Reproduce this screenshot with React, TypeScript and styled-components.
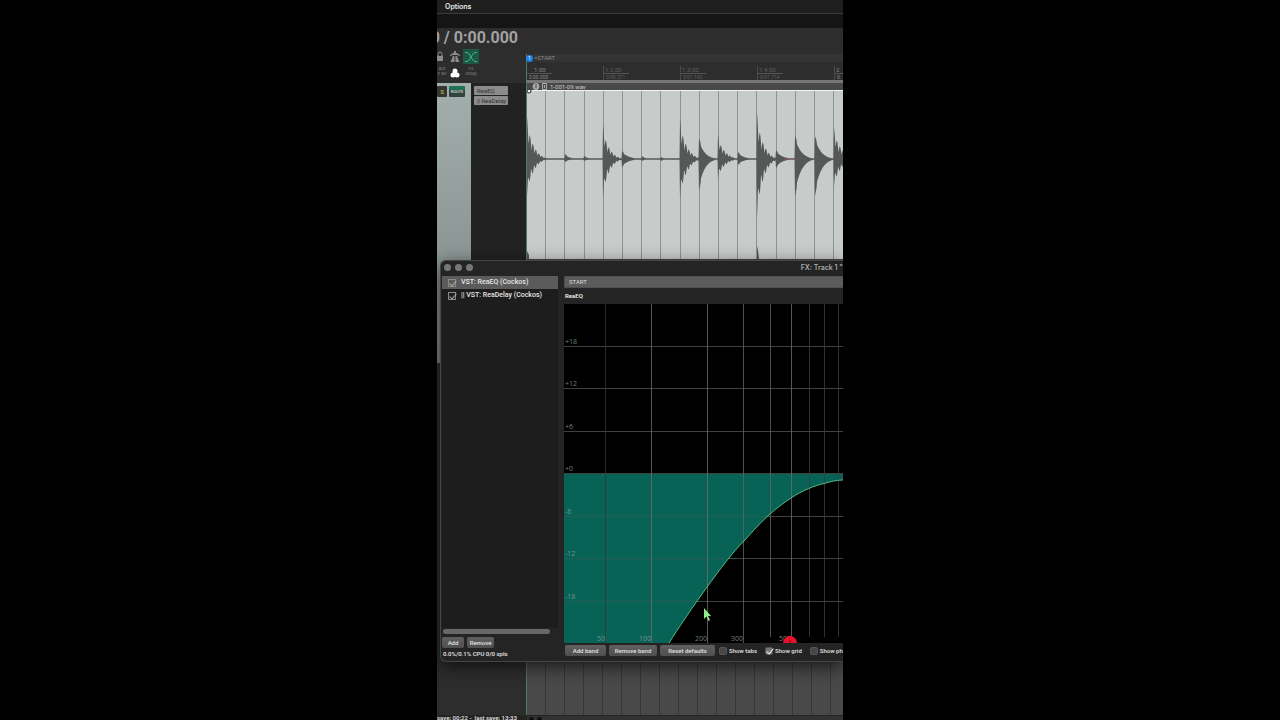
import React from "react";
import styled, { createGlobalStyle } from "styled-components";

const Global = createGlobalStyle`
  * { box-sizing: border-box; }
  body {
    margin: 0;
    background: #000;
    color: #ddd;
    font-family: Inter, "Liberation Sans", sans-serif;
    font-size: 7px;
    line-height: 10px;
  }
  button, input, select { font: inherit; color: inherit; margin: 0; }
`;

const Page = styled.main`
  display: flex;
  justify-content: center;
  height: 100vh;
  overflow: hidden;
`;

const Stage = styled.div`
  position: relative;
  display: flex;
  flex-direction: column;
  width: 100%;
  max-width: 406px;
  overflow: hidden;
  background: #2d2d2d;
`;

const MenuBar = styled.nav`
  height: 14px;
  flex: none;
  padding: 1px 8px;
  background: #1f1f1f;
  border-bottom: 1px solid #3b3b3b;
`;

const MenuButton = styled.button`
  display: block;
  padding: 0;
  border: 0;
  background: none;
  color: #e8e8e8;
  font-size: 7px;
  font-weight: 600;
  line-height: 11px;
`;

const Strip = styled.div`
  height: 14px;
  flex: none;
  background: #151515;
`;

const Workspace = styled.div`
  display: grid;
  grid-template-columns: 89px minmax(0, 1fr);
  flex: 1;
  min-height: 0;
`;

const SideColumn = styled.div`
  display: flex;
  flex-direction: column;
  min-width: 0;
`;

const TimeReadout = styled.div`
  height: 21px;
  flex: none;
  padding-right: 8px;
  display: flex;
  justify-content: flex-end;
  overflow: hidden;
  color: #a2a2a2;
  font: bold 16px/19px Roboto, sans-serif;
  white-space: pre;
`;

const ToolGrid = styled.div`
  display: grid;
  grid-template-columns: 10px 16px 16px;
  grid-template-rows: 16px 18px;
  height: 34px;
  flex: none;
`;

const ToolButton = styled.button<{ $active?: boolean }>`
  display: flex;
  align-items: center;
  justify-content: center;
  height: 15px;
  padding: 0;
  border: 0;
  background: ${(p) => (p.$active ? "#1d5846" : "transparent")};
`;

const ToolLabel = styled.span`
  display: flex;
  justify-content: center;
  align-items: flex-start;
  padding-top: 1px;
  color: #8a8a8a;
  font-size: 4px;
  line-height: 5px;
  text-align: center;
`;

const TrackRow = styled.section`
  display: grid;
  grid-template-columns: 34px 1fr;
  height: 280px;
  flex: none;
`;

const TrackPanel = styled.div`
  display: flex;
  gap: 2px;
  padding-top: 3px;
  background: linear-gradient(#a3afac, #8c9795 60%, #7b8583);
`;

const TrackButton = styled.button<{ $wide?: boolean }>`
  width: ${(p) => (p.$wide ? "16px" : "10px")};
  height: 11px;
  padding: 0;
  border: 0;
  border-radius: 1px;
  background: ${(p) => (p.$wide ? "linear-gradient(#1d7357 30%, #34423d 40%)" : "#33372f")};
  color: ${(p) => (p.$wide ? "#b5c9c1" : "#b0a54a")};
  font-family: Roboto, sans-serif;
  font-size: ${(p) => (p.$wide ? "4px" : "6px")};
  font-weight: 700;
  line-height: 11px;
`;

const FxSlots = styled.div`
  display: flex;
  flex-direction: column;
  gap: 1px;
  padding: 3px;
  background: #222;
`;

const FxSlot = styled.button`
  width: 34px;
  height: 9px;
  padding: 0 3px;
  border: 0;
  border-radius: 1px;
  background: #8b8b8b;
  color: #333;
  font: 6px/9px Roboto, sans-serif;
  text-align: left;
  white-space: pre;
`;

const ArrangeColumn = styled.div`
  display: flex;
  flex-direction: column;
  min-width: 0;
  padding-top: 26px;
`;

const Timeline = styled.div`
  display: flex;
  flex-direction: column;
  flex: 1;
  min-height: 0;
  border-left: 1px solid #55746a;
`;

const MarkerLane = styled.div`
  display: flex;
  align-items: center;
  gap: 1px;
  height: 8px;
  flex: none;
  background: #343434;
  color: #8a8a8a;
  font: 6px/8px Roboto, sans-serif;
`;

const MarkerBadge = styled.span`
  width: 7px;
  height: 7px;
  flex: none;
  margin-left: -1px;
  border-radius: 50%;
  background: #1e80ea;
  color: #fff;
  font-size: 5px;
  line-height: 7px;
  text-align: center;
`;

const Ruler = styled.div`
  display: grid;
  grid-template-columns: repeat(4, 77px) 1fr;
  height: 18px;
  flex: none;
  overflow: hidden;
  background: #2d2d2d;
`;

const RulerMark = styled.div<{ $lead?: boolean }>`
  margin: 4px 0 0 -1px;
  border-left: 1px solid #4b4b4b;
  color: ${(p) => (p.$lead ? "#8a8a8a" : "#606060")};
  font: 5px/6px Roboto, sans-serif;
  overflow: hidden;
  white-space: nowrap;
`;

const BarLabel = styled.span<{ $indent?: boolean }>`
  display: block;
  width: 25px;
  height: 8px;
  padding: 1px 0 0 ${(p) => (p.$indent ? "7px" : "1px")};
  border-bottom: 1px solid #555;
  font-size: 6px;
`;

const TimeLabel = styled.span`
  display: block;
  padding-left: 2px;
`;

const ItemEdge = styled.div`
  height: 3px;
  flex: none;
  background: #777;
`;

const ItemHeader = styled.div`
  display: flex;
  align-items: center;
  gap: 2px;
  height: 7px;
  flex: none;
  padding-left: 5px;
  background: #494949;
  color: #ccc;
  font: 6px/7px Roboto, sans-serif;
`;

const Drawing = styled.svg`
  display: block;
  flex: none;
`;

const LowerArrange = styled.div`
  flex: 1;
  min-height: 0;
  background: repeating-linear-gradient(90deg, transparent 0 18px, #363636 18px 19px), #494949;
`;

const Footer = styled.footer`
  display: grid;
  grid-template-columns: 89px 1fr;
  height: 5px;
  flex: none;
  overflow: hidden;
  background: #242424;
  color: #ddd;
  font: 600 6px/6px Roboto, sans-serif;
  white-space: nowrap;
`;

const ScrollTrack = styled.div`
  display: flex;
  align-items: center;
  gap: 3px;
  margin-top: 1px;
  padding-left: 2px;
  background: #333;
  border-left: 1px solid #222;
`;

const ScrollNub = styled.i`
  width: 5px;
  height: 4px;
  border-radius: 3px;
  background: #111;
`;

const FxWindow = styled.section`
  position: absolute;
  top: 260px;
  left: 3px;
  right: 0;
  height: 402px;
  display: flex;
  flex-direction: column;
  overflow: hidden;
  border: 1px solid #454545;
  border-right: 0;
  border-radius: 6px 0 0 6px;
  background: #242424;
  box-shadow: 0 5px 18px rgba(0, 0, 0, 0.65);
`;

const TitleBar = styled.header`
  display: flex;
  align-items: center;
  gap: 4px;
  height: 15px;
  flex: none;
  padding: 0 0 2px 3px;
  color: #aaa;
  white-space: nowrap;
`;

const WindowDot = styled.button`
  width: 7px;
  height: 7px;
  padding: 0;
  border: 0;
  border-radius: 50%;
  background: #777;
`;

const WindowTitle = styled.h1`
  margin: 0 0 0 auto;
  font-size: 7px;
  font-weight: 600;
  line-height: 10px;
`;

const WindowBody = styled.div`
  display: grid;
  grid-template-columns: 117px minmax(0, 1fr);
  column-gap: 6px;
  flex: 1;
  min-height: 0;
`;

const ChainColumn = styled.div`
  display: flex;
  flex-direction: column;
  padding-left: 1px;
`;

const ChainList = styled.div`
  flex: 1;
  background: #1d1d1d;
`;

const ChainItem = styled.label<{ $selected?: boolean }>`
  display: flex;
  align-items: center;
  gap: 5px;
  height: 13px;
  padding-left: 6px;
  background: ${(p) => (p.$selected ? "#5b5b5b" : "transparent")};
  color: #e6e6e6;
  font: 500 7px/13px Roboto, sans-serif;
  white-space: pre;
`;

const CheckBox = styled.input<{ $filled?: boolean }>`
  appearance: none;
  width: 8px;
  height: 8px;
  flex: none;
  border: 1px solid ${(p) => (p.$filled ? "#555" : "#8a8a8a")};
  border-radius: ${(p) => (p.$filled ? "2px" : "0")};
  background: ${(p) => (p.$filled ? "#484848" : "transparent")};

  &:checked {
    background: ${(p) => (p.$filled ? "#777" : "transparent")};
  }
  &:checked::after {
    content: "";
    display: block;
    width: 3px;
    height: 6px;
    margin: -1px 0 0 2px;
    border: solid ${(p) => (p.$filled ? "#eee" : "#aaa")};
    border-width: 0 1px 1px 0;
    transform: rotate(40deg);
  }
`;

const ListScroll = styled.div`
  height: 5px;
  margin: 1px 8px 0 1px;
  flex: none;
  border-radius: 3px;
  background: #686868;
`;

const ButtonRow = styled.div`
  display: flex;
  align-items: center;
  gap: 3px;
  height: 10px;
  margin-top: 3px;
  flex: none;
`;

const PushButton = styled.button<{ $width: number }>`
  width: ${(p) => p.$width}px;
  height: 11px;
  flex: none;
  padding: 0;
  border: 0;
  border-radius: 2px;
  background: linear-gradient(#606060, #4f4f4f);
  color: #e2e2e2;
  font: 500 6px/11px Roboto, sans-serif;
  white-space: nowrap;
`;

const CpuStatus = styled.p`
  height: 14px;
  margin: 0;
  padding: 1px;
  font: 500 6px/12px Roboto, sans-serif;
  color: #e8e8e8;
`;

const PluginColumn = styled.div`
  display: flex;
  flex-direction: column;
  min-width: 0;
`;

const PresetSelect = styled.select`
  appearance: none;
  width: 100%;
  height: 12px;
  flex: none;
  padding: 0 4px;
  border: 1px solid #505050;
  border-right: 0;
  border-radius: 2px 0 0 2px;
  background: #5c5c5c;
  color: #ddd;
  font: 6px/10px Roboto, sans-serif;
`;

const PluginName = styled.h2`
  height: 16px;
  margin: 0;
  padding: 3px 0 0 1px;
  flex: none;
  color: #eee;
  font: 600 6px/10px Roboto, sans-serif;
`;

const Controls = styled.div`
  display: flex;
  align-items: center;
  gap: 3px;
  height: 11px;
  margin-top: 2px;
  padding-left: 1px;
  overflow: hidden;
`;

const Options = styled.div`
  display: flex;
  gap: 8px;
  padding-left: 1px;
`;

const Option = styled.label`
  display: flex;
  align-items: center;
  gap: 2px;
  flex: none;
  color: #e2e2e2;
  font: 500 6px/10px Roboto, sans-serif;
  white-space: nowrap;
`;

const Pointer = styled.svg`
  position: absolute;
  top: 608px;
  left: 267px;
`;

type Hit = { x: number; up: number; down: number; decay: number; ring?: boolean };

const hits: Hit[] = [
  { x: 0, up: 42, down: 38, decay: 11, ring: true },
  { x: 38, up: 5, down: 3, decay: 6 },
  { x: 57, up: 3, down: 2, decay: 6 },
  { x: 76, up: 34, down: 40, decay: 10, ring: true },
  { x: 95, up: 8, down: 8, decay: 10 },
  { x: 115, up: 3, down: 2, decay: 4 },
  { x: 134, up: 2, down: 2, decay: 4 },
  { x: 153, up: 40, down: 41, decay: 12, ring: true },
  { x: 172, up: 21, down: 32, decay: 8 },
  { x: 191, up: 24, down: 20, decay: 12, ring: true },
  { x: 211, up: 7, down: 6, decay: 8 },
  { x: 230, up: 46, down: 60, decay: 11, ring: true },
  { x: 249, up: 9, down: 9, decay: 9 },
  { x: 268, up: 24, down: 38, decay: 9 },
  { x: 288, up: 23, down: 37, decay: 9 },
  { x: 307, up: 31, down: 28, decay: 14, ring: true },
];

const CENTER = 69;

function wavePath() {
  const top: string[] = [];
  const bottom: string[] = [];
  for (let x = 0; x <= 316; x += 0.5) {
    const hit = [...hits].reverse().find((h) => x >= h.x) ?? hits[0];
    const t = x - hit.x;
    const fade = Math.exp(-t / hit.decay) * Math.max(0.05, 1 - t / 22);
    const attack = t < 2 ? 1 : 0.85;
    const ring = (phase: number) =>
      hit.ring ? 0.45 + 0.55 * Math.abs(Math.cos((Math.PI * t) / 3 + phase)) : 1;
    top.push(`${x},${CENTER - Math.max(0.7, hit.up * fade * attack * ring(0))}`);
    bottom.unshift(`${x},${CENTER + Math.max(0.7, hit.down * fade * attack * ring(0.3))}`);
  }
  return `M${top.join("L")}L${bottom.join("L")}Z`;
}

const gridLines = Array.from({ length: 16 }, (_, i) => Math.round((i + 1) * 19.2) - 0.5);

function Waveform() {
  return (
    <Drawing width="316" height="169" viewBox="0 0 316 169" aria-label="Waveform">
      <rect width="316" height="169" fill="#c7cccb" />
      <rect width="316" height="1" fill="#f5f5f5" />
      {gridLines.map((x) => (
        <path key={x} d={`M${x} 1V169`} stroke="#8d9391" />
      ))}
      <path d={wavePath()} fill="#555857" />
      <path d="M258 69h10" stroke="#a95a62" strokeOpacity="0.7" />
      <path d="M0 161l2 4v5H0zM230 156l1 4 1 9h-2z" fill="#555857" />
      <circle cx="2" cy="1" r="2" fill="#eee" stroke="#222" />
    </Drawing>
  );
}

const verticals: [number, string][] = [
  [41.5, "#363636"],
  [87.5, "#6d6d6d"],
  [143.5, "#6d6d6d"],
  [179.5, "#626262"],
  [206.5, "#626262"],
  [227.5, "#6d6d6d"],
  [245.5, "#3c3c3c"],
  [260.5, "#3c3c3c"],
  [274.5, "#3c3c3c"],
];
const levels: [number, string][] = [
  [42.5, "+18"],
  [84.5, "+12"],
  [127.5, "+6"],
  [169.5, "+0"],
  [212.5, "-6"],
  [254.5, "-12"],
  [297.5, "-18"],
];
const frequencies: [number, string][] = [
  [33, "50"],
  [75, "100"],
  [131, "200"],
  [167, "300"],
  [215, "500"],
];
const curve =
  "M105 339C113 326 130 301 143 283C157 264 168 249 180 237C190 226 198 217 206 210C214 203 221 198 227 194C239 186 250 182 260 179.500C267 177.500 273 176 279 176";

function EqGraph() {
  return (
    <Drawing width="279" height="339" viewBox="0 0 279 339" aria-label="Equalizer curve">
      <rect width="279" height="339" fill="#000" />
      {levels.map(([y]) => (
        <path key={y} d={`M0 ${y}H279`} stroke="#404040" />
      ))}
      <path d={`${curve}V170H0V339Z`} fill="#066356" />
      {levels.slice(4).map(([y]) => (
        <path key={y} d={`M0 ${y}H${206 - (y - 212) / 1.25}`} stroke="#265e53" />
      ))}
      {verticals.map(([x, color], i) => (
        <path key={x} d={`M${x} 0V${i > 3 ? 333 : 339}`} stroke={color} strokeOpacity="0.8" />
      ))}
      <path d={curve} fill="none" stroke="#58b882" />
      <g fill="#8f9a96" fillOpacity="0.85" fontFamily="Open Sans, sans-serif" fontSize="7">
        {levels.map(([y, text]) => (
          <text key={text} x="1" y={y - 3}>{text}</text>
        ))}
        {frequencies.map(([x, text]) => (
          <text key={text} x={x} y="337">{text}</text>
        ))}
      </g>
      <circle cx="226" cy="339" r="7" fill="#e5142a" />
      <path d="M226 336v3" stroke="#701" />
    </Drawing>
  );
}

export default function App() {
  return (
    <Page>
      <Global />
      <Stage>
        <MenuBar>
          <MenuButton>Options</MenuButton>
        </MenuBar>
        <Strip />
        <Workspace>
          <SideColumn>
            <TimeReadout>0 / 0:00.000</TimeReadout>
            <ToolGrid>
              <ToolButton aria-label="Lock">
                <svg width="10" height="12" viewBox="0 0 10 12">
                  <path d="M0 5h6v5H0z" fill="#8b8b8b" />
                  <path d="M1 5V3a2 2 0 0 1 4 0v2" fill="none" stroke="#8b8b8b" />
                </svg>
              </ToolButton>
              <ToolButton aria-label="Metronome">
                <svg width="12" height="12" viewBox="0 0 12 12" fill="#8b8b8b">
                  <path d="M5 0h2v2H5zM1 4l3-2h4l3 2v1L8 4H4L1 5z" />
                  <path d="M4 5h1.500v6H1.500zM8 5H6.500v6h4z" />
                </svg>
              </ToolButton>
              <ToolButton $active aria-label="Crossfade">
                <svg width="12" height="12" viewBox="0 0 12 12" fill="none" stroke="#45b687">
                  <path d="M0 1.500h2c3 0 5 9 8 9h2M0 10.500h2c3 0 5-9 8-9h2" />
                </svg>
              </ToolButton>
              <ToolLabel>ack<br />v sel</ToolLabel>
              <ToolButton aria-label="Group">
                <svg width="10" height="10" viewBox="0 0 10 10" fill="#fff">
                  <circle cx="5" cy="3" r="2.500" />
                  <circle cx="3" cy="7" r="2.500" />
                  <circle cx="7" cy="7" r="2.500" />
                </svg>
              </ToolButton>
              <ToolLabel>FX<br />Group</ToolLabel>
            </ToolGrid>
            <TrackRow>
              <TrackPanel>
                <TrackButton>S</TrackButton>
                <TrackButton $wide>ROUTE</TrackButton>
              </TrackPanel>
              <FxSlots>
                <FxSlot>ReaEQ</FxSlot>
                <FxSlot>|| ReaDelay</FxSlot>
              </FxSlots>
            </TrackRow>
          </SideColumn>
          <ArrangeColumn>
            <Timeline>
              <MarkerLane>
                <MarkerBadge>1</MarkerBadge>=START
              </MarkerLane>
              <Ruler>
                <RulerMark $lead><BarLabel $indent>1.00</BarLabel><TimeLabel>0:00.000</TimeLabel></RulerMark>
                <RulerMark><BarLabel>1.2.00</BarLabel><TimeLabel>0:00.571</TimeLabel></RulerMark>
                <RulerMark><BarLabel>1.3.00</BarLabel><TimeLabel>0:01.142</TimeLabel></RulerMark>
                <RulerMark><BarLabel>1.4.00</BarLabel><TimeLabel>0:01.714</TimeLabel></RulerMark>
                <RulerMark $lead><BarLabel>2</BarLabel><TimeLabel>0:</TimeLabel></RulerMark>
              </Ruler>
              <ItemEdge />
              <ItemHeader>
                <svg width="16" height="7" viewBox="0 0 16 7" fill="none" stroke="#aaa">
                  <circle cx="4" cy="3.500" r="3" fill="#aaa" />
                  <path d="M4 1v4" stroke="#444" />
                  <path d="M10.500 .5h4v6h-4zM12.500 2v3" />
                </svg>
                1-001-09.wav
              </ItemHeader>
              <Waveform />
              <LowerArrange />
            </Timeline>
          </ArrangeColumn>
        </Workspace>
        <Footer>
          <span>save: 00:22 - &nbsp;last save: 13:33</span>
          <ScrollTrack><ScrollNub /><ScrollNub /></ScrollTrack>
        </Footer>

        <FxWindow>
          <TitleBar>
            <WindowDot aria-label="Close" />
            <WindowDot aria-label="Minimize" />
            <WindowDot aria-label="Zoom" />
            <WindowTitle>FX: Track 1 "</WindowTitle>
          </TitleBar>
          <WindowBody>
            <ChainColumn>
              <ChainList>
                <ChainItem $selected>
                  <CheckBox type="checkbox" defaultChecked />VST: ReaEQ (Cockos)
                </ChainItem>
                <ChainItem>
                  <CheckBox type="checkbox" defaultChecked />|| VST: ReaDelay (Cockos)
                </ChainItem>
              </ChainList>
              <ListScroll />
              <ButtonRow>
                <PushButton $width={22}>Add</PushButton>
                <PushButton $width={27}>Remove</PushButton>
              </ButtonRow>
              <CpuStatus>0.0%/0.1% CPU 0/0 spls</CpuStatus>
            </ChainColumn>
            <PluginColumn>
              <PresetSelect aria-label="Preset" defaultValue="START">
                <option>START</option>
              </PresetSelect>
              <PluginName>ReaEQ</PluginName>
              <EqGraph />
              <Controls>
                <PushButton $width={41}>Add band</PushButton>
                <PushButton $width={48}>Remove band</PushButton>
                <PushButton $width={55}>Reset defaults</PushButton>
                <Options>
                  <Option><CheckBox $filled type="checkbox" />Show tabs</Option>
                  <Option><CheckBox $filled type="checkbox" defaultChecked />Show grid</Option>
                  <Option><CheckBox $filled type="checkbox" />Show ph</Option>
                </Options>
              </Controls>
            </PluginColumn>
          </WindowBody>
        </FxWindow>
        <Pointer width="7" height="14" viewBox="0 0 7 14">
          <path d="M0 0v11l2.500-2.500L4.500 13l1.500-1-2-4h3z" fill="#90ee88" />
        </Pointer>
      </Stage>
    </Page>
  );
}
